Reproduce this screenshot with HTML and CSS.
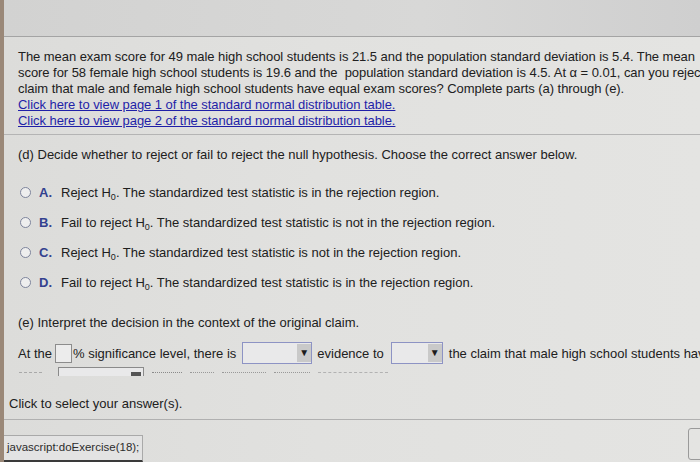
FILE: index.html
```html
<!DOCTYPE html>
<html>
<head>
<meta charset="utf-8">
<link rel="stylesheet" href="styles.css">
</head>
<body>
<div class="screen">
  <div class="topbar"></div>
  <div class="question">
    <p class="line">The mean exam score for 49 male high school students is 21.5 and the population standard deviation is 5.4. The mean</p>
    <p class="line">score for 58 female high school students is 19.6 and the&nbsp; population standard deviation is 4.5. At α = 0.01, can you reject the</p>
    <p class="line">claim that male and female high school students have equal exam scores? Complete parts (a) through (e).</p>
    <p class="line"><a class="link" href="#">Click here to view page 1 of the standard normal distribution table.</a></p>
    <p class="line"><a class="link" href="#">Click here to view page 2 of the standard normal distribution table.</a></p>
  </div>
  <div class="part">
    <p class="prompt">(d) Decide whether to reject or fail to reject the null hypothesis. Choose the correct answer below.</p>
    <ul class="options">
      <li class="option"><span class="radio"></span><span class="letter">A.</span><span>Reject H<sub>0</sub>. The standardized test statistic is in the rejection region.</span></li>
      <li class="option"><span class="radio"></span><span class="letter">B.</span><span>Fail to reject H<sub>0</sub>. The standardized test statistic is not in the rejection region.</span></li>
      <li class="option"><span class="radio"></span><span class="letter">C.</span><span>Reject H<sub>0</sub>. The standardized test statistic is not in the rejection region.</span></li>
      <li class="option"><span class="radio"></span><span class="letter">D.</span><span>Fail to reject H<sub>0</sub>. The standardized test statistic is in the rejection region.</span></li>
    </ul>
    <p class="prompt prompt-e">(e) Interpret the decision in the context of the original claim.</p>
    <div class="fill">
      <span>At the</span><span class="box"></span><span>% significance level, there is</span>
      <span class="select sel1"><span class="arrow">▼</span></span>
      <span>evidence to</span>
      <span class="select sel2"><span class="arrow">▼</span></span>
      <span class="nowrap">the claim that male high school students have</span>
    </div>
    <div class="clipped">
      <span class="dots d1"></span>
      <span class="select sel3"><span class="knob"></span></span>
      <span class="dots d2"></span>
      <span class="dots d3"></span>
      <span class="dots d4"></span>
      <span class="dots d5"></span>
      <span class="dots d6"></span>
    </div>
  </div>
  <p class="hint">Click to select your answer(s).</p>
  <div class="footer"></div>
  <div class="status">javascript:doExercise(18);</div>
  <div class="corner-btn"></div>
</div>
</body>
</html>
```
FILE: styles.css
```css
html, body {
  margin: 0;
  padding: 0;
}
body {
  width: 700px;
  height: 462px;
  overflow: hidden;
  font-family: "Liberation Sans", Arial, sans-serif;
  color: #202020;
}
.screen {
  position: relative;
  width: 700px;
  height: 462px;
  overflow: hidden;
  background: linear-gradient(90deg, #dcdcda 0%, #e1e1df 45%, #e4e4e2 100%);
  border-left: 4px solid #9a8878;
  box-sizing: border-box;
}
.topbar {
  height: 36px;
  background: linear-gradient(90deg, #d2d2d1, #d8d8d7 60%, #cfcfcf);
  border-bottom: 1px solid #a4a4a4;
}
.question {
  padding: 12px 0 0 14px;
  height: 85px;
  border-bottom: 1px solid #b4b4b4;
  white-space: nowrap;
}
.line {
  margin: 0;
  font-size: 13px;
  line-height: 16px;
  letter-spacing: -0.05px;
}
.link {
  color: #1f1fa8;
  text-decoration: underline;
}
.part {
  padding-left: 14px;
}
.prompt {
  margin: 12px 0 0;
  font-size: 13px;
  line-height: 16px;
}
.options {
  list-style: none;
  margin: 14px 0 0;
  padding: 0;
}
.option {
  display: flex;
  align-items: center;
  height: 30px;
  font-size: 13px;
  white-space: nowrap;
}
.option sub {
  font-size: 9px;
  vertical-align: -3px;
  line-height: 0;
}
.radio {
  width: 9px;
  height: 9px;
  border: 1.5px solid #7d849c;
  border-radius: 50%;
  background: #eeeeee;
  margin-left: 2px;
  margin-right: 8px;
}
.letter {
  color: #33418f;
  font-weight: bold;
  width: 22px;
}
.prompt-e {
  margin-top: 18px;
}
.fill {
  display: flex;
  align-items: center;
  margin-top: 11px;
  height: 22px;
  font-size: 13px;
  white-space: nowrap;
}
.fill > *, .clipped > * {
  flex-shrink: 0;
}
.box {
  width: 15px;
  height: 17px;
  border: 1px solid #8c8c8c;
  background: #ececec;
  margin: 0 1px 0 3px;
}
.select {
  position: relative;
  height: 20px;
  border: 1px solid #8d93c4;
  background: #e9e9ea;
}
.sel1 { width: 68px; margin: 0 5px 0 6px; }
.sel2 { width: 50px; margin: 0 6px 0 7px; }
.arrow {
  position: absolute;
  right: 0;
  top: 1px;
  bottom: 1px;
  width: 14px;
  background: #c9c9c9;
  font-size: 10px;
  line-height: 18px;
  text-align: center;
  color: #1b1b1b;
}
.clipped {
  display: flex;
  align-items: flex-start;
  height: 9px;
  overflow: hidden;
  margin-top: 3px;
}
.dots {
  height: 0;
  margin-top: 5px;
  border-top: 1px dashed #a9a9a9;
}
.d1 { width: 28px; margin-left: -4px; }
.d2 { width: 30px; margin-left: 4px; border-top-style: dotted; border-color: #8a8a8a; }
.d3 { width: 24px; margin-left: 8px; border-top-style: dotted; border-color: #999; }
.d4 { width: 44px; margin-left: 8px; border-top-style: dotted; border-color: #999; }
.d5 { width: 36px; margin-left: 8px; border-top-style: dotted; border-color: #999; }
.d6 { width: 70px; margin-left: 8px; border-color: #b2b2b2; }
.sel3 {
  width: 84px;
  height: 20px;
  border-color: #8a8a8a;
  margin: 0 4px 0 16px;
}
.knob {
  position: absolute;
  right: 2px;
  top: 4px;
  width: 10px;
  height: 5px;
  background: #555;
}
.hint {
  margin: 20px 0 0 5px;
  font-size: 13px;
  line-height: 16px;
}
.footer {
  margin-top: 7px;
  border-top: 1px solid #b0b0b0;
}
.status {
  position: absolute;
  left: -4px;
  bottom: 0;
  width: 135px;
  height: 24px;
  padding-left: 6px;
  font-size: 11.5px;
  line-height: 22px;
  background: #e3e3e3;
  border: 1px solid #a9a9a9;
  border-bottom: 2px solid #3a3a3a;
  color: #2c2c2c;
}
.corner-btn {
  position: absolute;
  right: -10px;
  bottom: 2px;
  width: 20px;
  height: 30px;
  border: 1px solid #9a9a9a;
  border-radius: 3px;
}
.nowrap { white-space: nowrap; }
```
